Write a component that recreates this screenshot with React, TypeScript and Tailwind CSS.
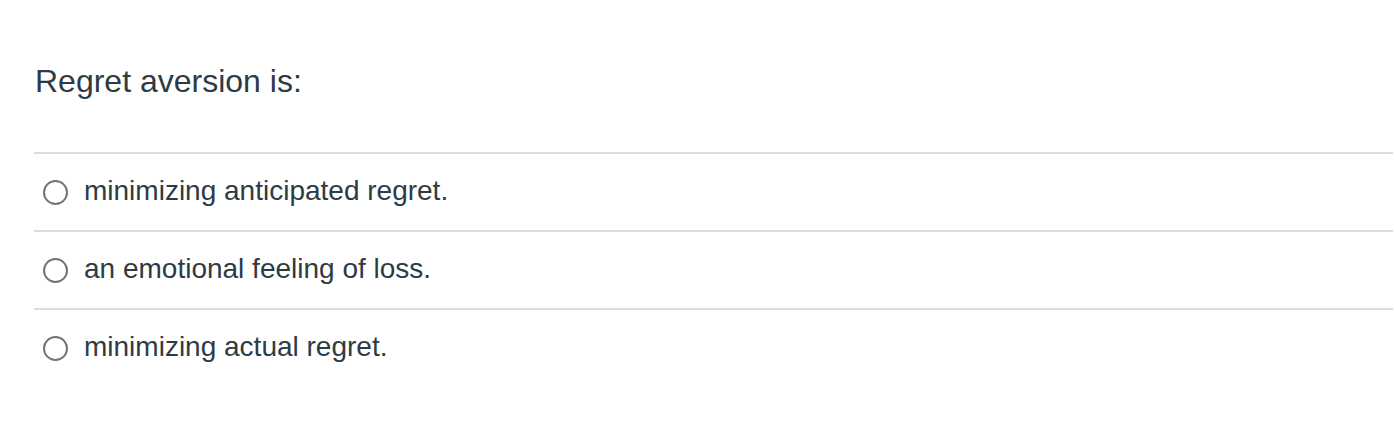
export default function App() {
  const options = [
    "minimizing anticipated regret.",
    "an emotional feeling of loss.",
    "minimizing actual regret.",
  ];
  return (
    <div
      className="w-[1394px] h-[424px] bg-white text-[#2d3b45]"
      style={{ fontFamily: '"Liberation Sans", Arial, Helvetica, sans-serif' }}
    >
      <div className="pl-[34px] pr-[1px] pt-[63px]">
        <div className="pl-[1px] text-[32px] leading-[36px]">Regret aversion is:</div>
        <div className="mt-[53px]">
          {options.map((o) => (
            <div
              key={o}
              className="flex h-[78px] items-center border-t-2 border-[#dcdcdc] pl-[9px]"
            >
              <span className="box-border h-[25px] w-[25px] shrink-0 rounded-full border-2 border-[#737373] bg-white" />
              <span className="ml-[16px] pb-[2px] text-[28px] leading-[32px]">{o}</span>
            </div>
          ))}
        </div>
      </div>
    </div>
  );
}
